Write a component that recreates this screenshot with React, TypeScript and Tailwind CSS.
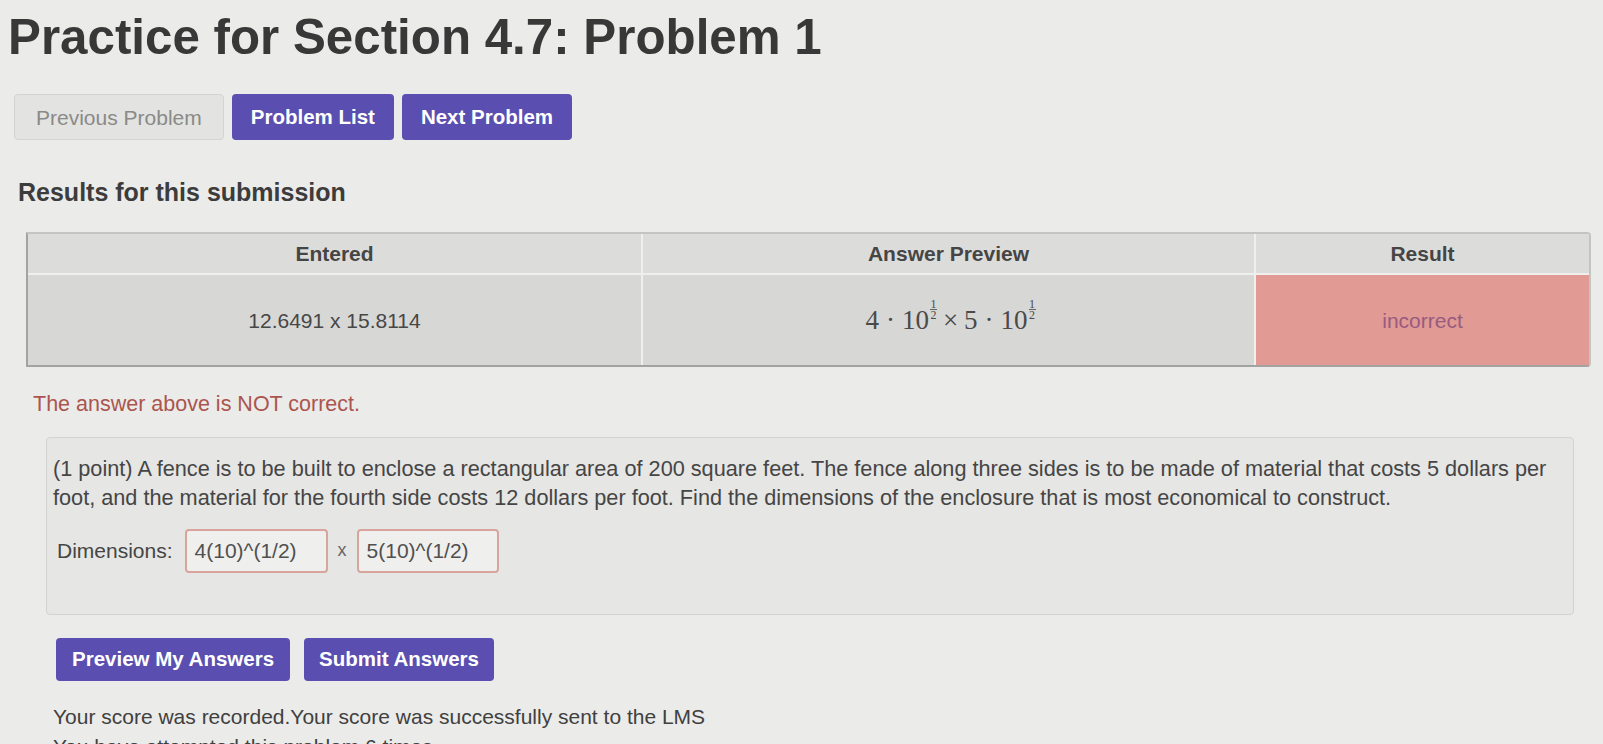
import React from 'react';

const Half: React.FC = () => (
  <span className="inline-flex flex-col items-center align-top -mt-[1px] ml-[1px] text-[12px] leading-[10px]">
    <span>1</span>
    <span className="w-[7px] border-t border-[#666]" />
    <span>2</span>
  </span>
);

const App: React.FC = () => {
  return (
    <div className="min-h-screen w-full overflow-hidden bg-[#ebebe9] font-['Liberation_Sans',Arial,sans-serif] text-[#444]">
      {/* Title */}
      <h1 className="ml-[8px] mt-[12px] text-[49.3px] font-bold leading-none text-[#383838] whitespace-nowrap">
        Practice for Section 4.7: Problem 1
      </h1>

      {/* Problem navigation */}
      <div className="ml-[14px] mt-[33px] flex items-center gap-[8px]">
        <button className="h-[46px] rounded-[4px] border border-[#d4d4d2] bg-[#e3e3e1] px-[21px] text-[21px] text-[#8a8a88]">
          Previous Problem
        </button>
        <button className="h-[46px] rounded-[4px] bg-[#5a4fb1] px-[19px] text-[20.5px] font-bold text-white">
          Problem List
        </button>
        <button className="h-[46px] rounded-[4px] bg-[#5a4fb1] px-[19px] text-[20.5px] font-bold text-white">
          Next Problem
        </button>
      </div>

      <h2 className="ml-[18px] mt-[40px] text-[25px] font-bold leading-none text-[#3c3c3c]">
        Results for this submission
      </h2>

      {/* Results table */}
      <div className="ml-[26px] mr-[12px] mt-[27px] grid grid-cols-[613px_611px_1fr] gap-[2px] rounded-r-[4px] border-2 border-[#c4c4c2] border-l-[#a3a3a1] border-b-[#a3a3a1] bg-[#efefed]">
        <div className="flex h-[39px] items-center justify-center bg-[#dcdcda] text-[21px] font-bold text-[#454545]">
          Entered
        </div>
        <div className="flex h-[39px] items-center justify-center bg-[#dcdcda] text-[21px] font-bold text-[#454545]">
          Answer Preview
        </div>
        <div className="flex h-[39px] items-center justify-center bg-[#dcdcda] text-[21px] font-bold text-[#454545]">
          Result
        </div>
        <div className="flex h-[90px] items-center justify-center bg-[#d7d7d5] text-[21px] text-[#474747]">
          12.6491 x 15.8114
        </div>
        <div className="flex h-[90px] items-center justify-center bg-[#d7d7d5] pl-[4px] font-['Liberation_Serif',serif] text-[27px] text-[#4a4a4a]">
          <span className="whitespace-nowrap">
            4<span className="mx-[7px]">·</span>10<Half />
            <span className="mx-[6px]">×</span>5<span className="mx-[7px]">·</span>10<Half />
          </span>
        </div>
        <div className="flex h-[90px] items-center justify-center bg-[#e19a94] text-[21px] text-[#985b80]">
          incorrect
        </div>
      </div>

      <p className="ml-[33px] mt-[27px] text-[21.5px] leading-none text-[#ab554f]">
        The answer above is NOT correct.
      </p>

      {/* Problem body */}
      <div className="ml-[46px] mr-[29px] mt-[21px] h-[178px] rounded-[4px] border border-[#d3d3d1] bg-[#e6e6e4] pl-[6px] pt-[16px]">
        <p className="text-[21.7px] leading-[29px] text-[#454545] whitespace-nowrap">
          (1 point) A fence is to be built to enclose a rectangular area of 200 square feet. The fence along three sides is to be made of material that costs 5 dollars per
          <br />
          foot, and the material for the fourth side costs 12 dollars per foot. Find the dimensions of the enclosure that is most economical to construct.
        </p>
        <div className="ml-[4px] mt-[17px] flex items-center text-[21px] text-[#454545]">
          <span>Dimensions:</span>
          <div className="ml-[12px] flex h-[44px] w-[143px] items-center rounded-[4px] border-2 border-[#d7a59c] bg-[#efefed] pl-[8px] text-[#505050]">
            4(10)^(1/2)
          </div>
          <span className="mx-[10px] text-[18px] text-[#666]">x</span>
          <div className="flex h-[44px] w-[142px] items-center rounded-[4px] border-2 border-[#d7a59c] bg-[#efefed] pl-[8px] text-[#505050]">
            5(10)^(1/2)
          </div>
        </div>
      </div>

      {/* Submit buttons */}
      <div className="ml-[56px] mt-[23px] flex items-center gap-[14px]">
        <button className="h-[43px] rounded-[4px] bg-[#5a4fb1] px-[16px] text-[20.5px] font-bold text-white">
          Preview My Answers
        </button>
        <button className="h-[43px] rounded-[4px] bg-[#5a4fb1] px-[15px] text-[20.5px] font-bold text-white">
          Submit Answers
        </button>
      </div>

      <div className="ml-[53px] mt-[21px] text-[21px] leading-[30px] text-[#404040]">
        <p>Your score was recorded.Your score was successfully sent to the LMS</p>
        <p>You have attempted this problem 6 times.</p>
      </div>
    </div>
  );
};

export default App;
